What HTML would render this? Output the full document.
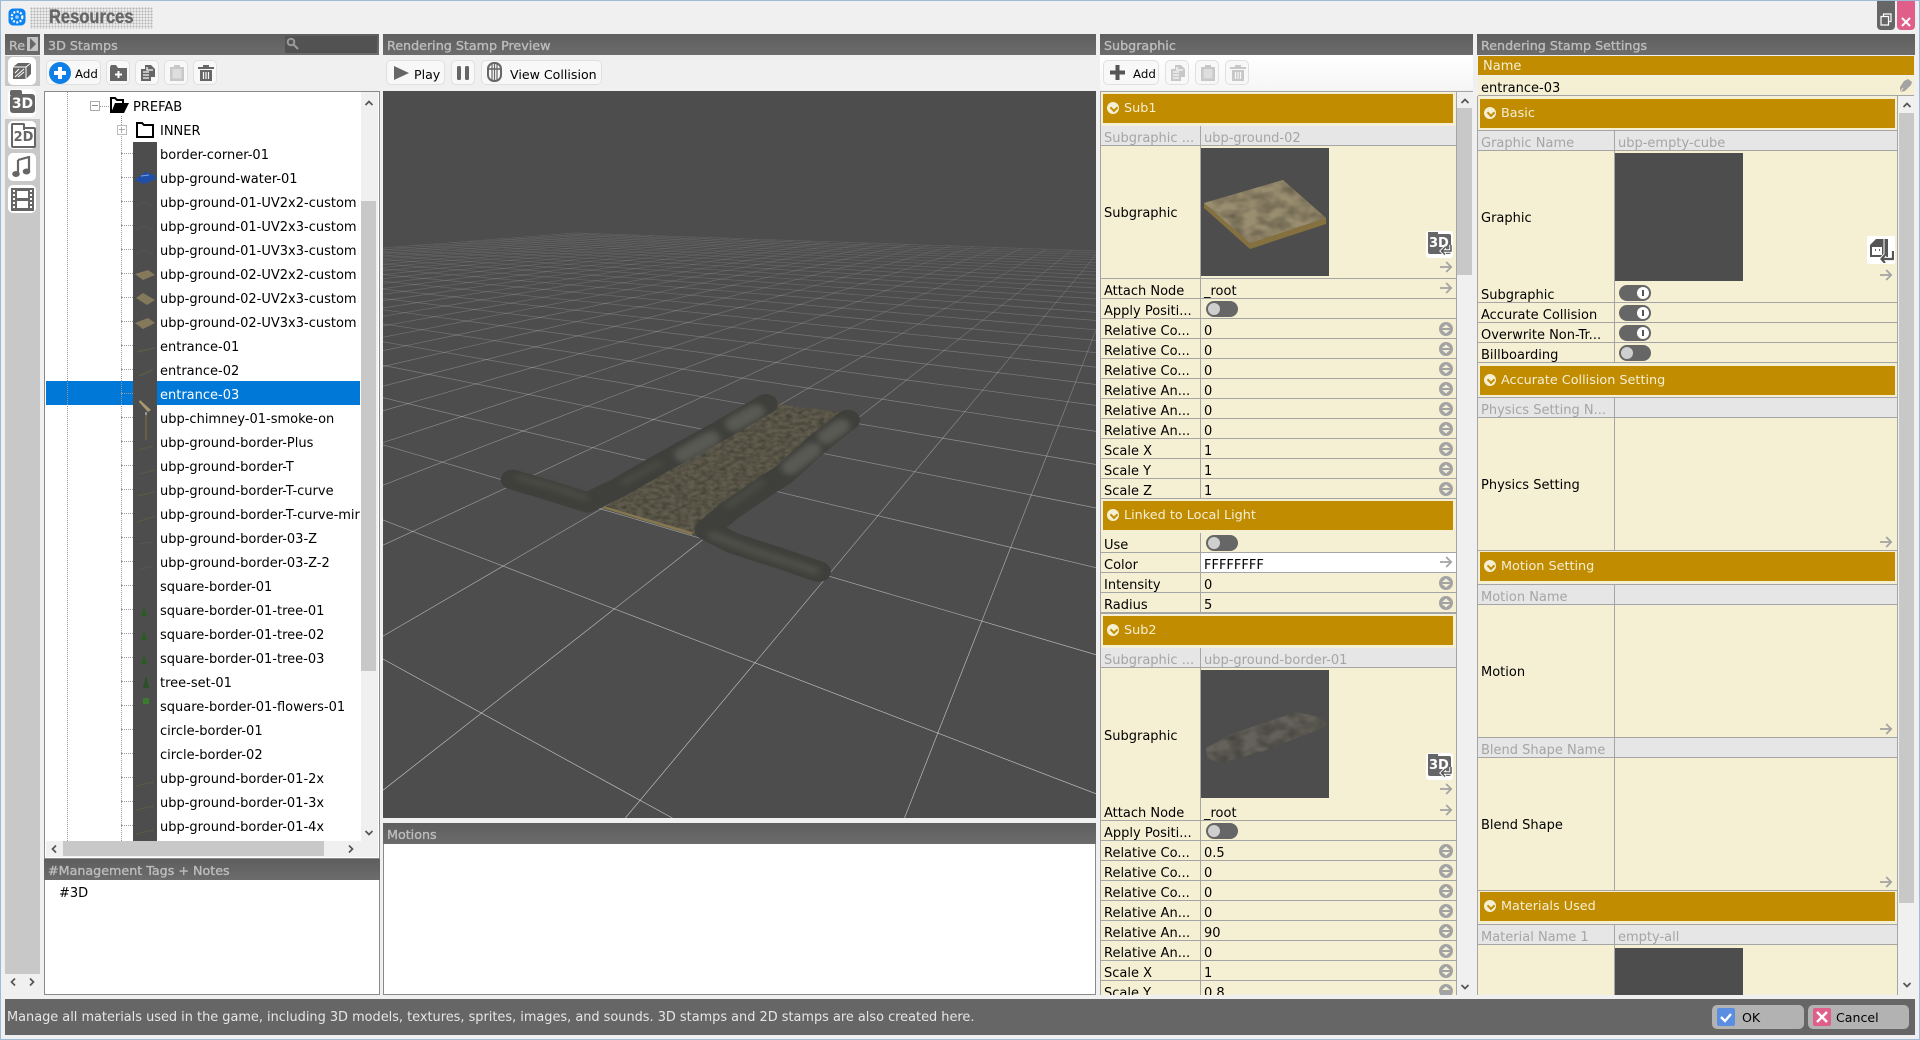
<!DOCTYPE html>
<html><head><meta charset="utf-8"><title>Resources</title>
<style>
html,body{margin:0;padding:0}
body{width:1920px;height:1040px;overflow:hidden;background:#f0f0f0;font:13px/20px "DejaVu Sans","Liberation Sans",sans-serif;color:#000;position:relative}
.a{position:absolute}
.h{position:absolute;height:21px;background:linear-gradient(#5e5e5e,#6c6c6c);color:#bdbdbd;font-weight:normal;font-size:12.7px;-webkit-text-stroke:.35px #bdbdbd;line-height:24px;padding-left:4px;box-sizing:border-box;white-space:nowrap;overflow:hidden}
.b{position:absolute;top:60px;height:25px;box-sizing:border-box;border:1px solid #e0e0e0;border-radius:5px;background:#f8f8f8;line-height:26px;font-size:12.6px;white-space:nowrap}
.b svg{position:absolute}
.tree{position:absolute;left:44px;top:91px;width:336px;height:768px;box-sizing:border-box;border:1px solid #8a8a8a;background:#fff;overflow:hidden}
.rows{position:absolute;left:1px;top:49px;width:314px;height:699px;overflow:hidden}
.rows div{height:24px;line-height:29px;padding-left:114px;white-space:nowrap;position:relative;font-size:13px}
.rows div:before{content:"";position:absolute;left:75px;top:12px;width:12px;border-top:1px dotted #999}
.rows .s{background:#0078d7;color:#fff}
.p{position:absolute;overflow:hidden;background:#fff}
.g{position:absolute;height:29px;background:#c18c00;color:#f5efd3;line-height:30px;padding-left:21px;box-sizing:border-box;white-space:nowrap;font-size:12.8px}
.g:before{content:"";position:absolute;left:4px;top:8px;width:12px;height:12px;border-radius:50%;background:#f5efd3}
.g:after{content:"";position:absolute;left:7.5px;top:11px;width:4px;height:4px;border:solid #c18c00;border-width:0 2px 2px 0;transform:rotate(45deg)}
.r{position:absolute;box-sizing:border-box;border-bottom:1px solid #a5a5a5;background:#f5efd3;overflow:hidden}
.r .l,.r .v{position:absolute;top:0;white-space:nowrap;font-size:13px;line-height:25px}
.r .v{line-height:26px}
.r .d{position:absolute;top:0;bottom:0;width:1px;background:#a5a5a5}
.gy{background:#e6e6e6;color:#a5a5a5}
.sub .r{left:0;width:355px}
.sub .l{left:3px}.sub .v{left:103px}.sub .d{left:99px}
.set .r{left:0;width:419px}
.set .l{left:3px}.set .v{left:140px}.set .d{left:136px}
.k{position:absolute;left:105px;top:2px;width:32px;height:16px;border-radius:8px;background:#666}
.k:before{content:"";position:absolute;left:2px;top:2px;width:12px;height:12px;border-radius:50%;background:#cfcfcf}
.k.on:before{left:18px;background:#fff}
.k.on:after{content:"";position:absolute;left:23px;top:5px;width:2px;height:6px;background:#555}
.set .k{left:141px}
.ic{position:absolute}
.th{position:absolute;background:#4d4d4d}
.sb{position:absolute;background:#f0f0f0}
.t{position:absolute;width:28px;height:28px;background:#fff;border-radius:5px}
.tg{position:absolute;left:327px;top:88px;width:23px;height:20px;background:#666;border-radius:2px;color:#fff;font:bold 13px/20px 'DejaVu Sans',sans-serif;padding-left:1px;box-sizing:border-box}
</style></head><body>
<svg width="0" height="0" style="position:absolute">
<defs>
<symbol id="arr" viewBox="0 0 14 14"><path d="M1 7H12M7.2 2L12.2 7L7.2 12" fill="none" stroke="#a3a3a3" stroke-width="1.7"/></symbol>
<symbol id="spin" viewBox="0 0 16 16"><circle cx="8" cy="8" r="7" fill="#a3a3a3"/><path d="M4 7L8 3.5L12 7ZM4 9L8 12.5L12 9Z" fill="#f5efd3"/></symbol>
<symbol id="up" viewBox="0 0 10 8"><path d="M1.5 6L5 2.5L8.5 6" fill="none" stroke="#555" stroke-width="1.7"/></symbol>
<symbol id="dn" viewBox="0 0 10 8"><path d="M1.5 2L5 5.5L8.5 2" fill="none" stroke="#555" stroke-width="1.7"/></symbol>
<symbol id="lf" viewBox="0 0 8 10"><path d="M6 1.5L2.5 5L6 8.5" fill="none" stroke="#555" stroke-width="1.7"/></symbol>
<symbol id="rt" viewBox="0 0 8 10"><path d="M2 1.5L5.5 5L2 8.5" fill="none" stroke="#555" stroke-width="1.7"/></symbol>
<symbol id="copy" viewBox="0 0 18 18"><path d="M6 1H12L16 5V13H12V17H2V5H6Z" fill="currentColor"/><path d="M8 3V6H14M4 8H10M4 11H10M4 14H10" stroke="#f8f8f8" stroke-width="1.3" fill="none"/></symbol>
<symbol id="paste" viewBox="0 0 18 18"><path d="M2 3H6V1H12V3H16V17H2Z" fill="currentColor"/><rect x="4.5" y="5" width="9" height="9.5" fill="#f8f8f8" opacity=".45"/></symbol>
<symbol id="trash" viewBox="0 0 18 18"><path d="M1 3H6V1H12V3H17V5H1ZM3 6H15V17H3Z" fill="currentColor"/><path d="M6.5 8V15M9 8V15M11.5 8V15" stroke="#f8f8f8" stroke-width="1.2"/></symbol>
<symbol id="sw" viewBox="0 0 14 14"><path d="M12 2V8H3M6 4.5L2.5 8L6 11.5" fill="none" stroke="#fff" stroke-width="3.4"/><path d="M12 2V8H3M6 4.5L2.5 8L6 11.5" fill="none" stroke="#555" stroke-width="1.5"/></symbol>
<filter id="tx" x="0" y="0" width="100%" height="100%" color-interpolation-filters="sRGB"><feTurbulence type="fractalNoise" baseFrequency=".07 .11" numOctaves="2" seed="4" result="n"/><feColorMatrix in="n" type="matrix" values="0 0 0 0 0 0 0 0 0 0 0 0 0 0 0 .55 0 0 0 -.17" result="m"/><feComposite in="m" in2="SourceAlpha" operator="in" result="c"/><feMerge><feMergeNode in="SourceGraphic"/><feMergeNode in="c"/></feMerge></filter>
<filter id="sf" x="-10%" y="-10%" width="120%" height="120%" color-interpolation-filters="sRGB"><feGaussianBlur stdDeviation="7"/></filter>
</defs></svg>

<!-- window frame -->
<div class="a" style="left:0;top:0;width:1920px;height:1px;background:#9dbad6"></div>
<div class="a" style="left:0;top:0;width:1px;height:1040px;background:#9dbad6"></div>
<div class="a" style="right:0;top:0;width:1px;height:1040px;background:#9dbad6"></div>
<div class="a" style="left:0;top:1039px;width:1920px;height:1px;background:#9dbad6"></div>

<!-- title -->
<svg class="ic" style="left:8px;top:8px" width="18" height="18" viewBox="0 0 18 18"><rect width="17" height="17" x=".5" y=".5" rx="4.5" fill="#0d83f2"/><circle cx="9" cy="9" r="5.3" fill="none" stroke="#fff" stroke-width="2.2" stroke-dasharray="2 1.5"/><circle cx="9" cy="9" r="1.8" fill="#9fd0ff"/></svg>
<div class="a" style="left:30px;top:7px;width:123px;height:22px;background-image:radial-gradient(circle,#b4b4b4 1px,transparent 1.1px);background-size:3px 3px"></div>
<div class="a" style="left:49px;top:6px;font:bold 19px/24px 'Liberation Sans',sans-serif;color:#666;-webkit-text-stroke:.3px #666;transform:scaleX(.87);transform-origin:0 0">Resources</div>
<div class="a" style="left:1877px;top:1px;width:18px;height:29px;background:#666;border-radius:0 0 4px 4px"></div>
<svg class="ic" style="left:1880px;top:13px" width="12" height="13" viewBox="0 0 12 13"><path d="M3.5 3.5V1H11V8.5H8.5M1 3.5H8.5V12H1Z" fill="none" stroke="#fff" stroke-width="1.2"/></svg>
<div class="a" style="left:1897px;top:1px;width:18px;height:29px;background:#e05f8a;border-radius:0 0 4px 4px"></div>
<svg class="ic" style="left:1901px;top:17px" width="10" height="10" viewBox="0 0 10 10"><path d="M1 1L9 9M9 1L1 9" stroke="#fff" stroke-width="2"/></svg>

<!-- left strip -->
<div class="a" style="left:5px;top:56px;width:35px;height:918px;background:#c8c8c8"></div>
<div class="h" style="left:5px;top:34px;width:35px;padding-left:4px">Re</div>
<div class="a" style="left:27px;top:37px;width:11px;height:14px;background:#c4c4c4"></div>
<svg class="ic" style="left:29px;top:38px" width="8" height="12" viewBox="0 0 8 12"><path d="M1 0L7 6L1 12Z" fill="#666"/></svg>
<div class="a" style="left:5px;top:86px;width:35px;height:33px;background:#f0f0f0"></div>
<div class="t" style="left:8px;top:57px"></div>
<svg class="ic" style="left:12px;top:62px" width="20" height="18" viewBox="0 0 20 18"><path d="M1 5L6 1H19V12L14 17H1Z" fill="#666"/><path d="M1 5H14V17M14 5L19 1" stroke="#fff" stroke-width="1" fill="none"/><path d="M3 15L12 7M6 15L12 10M3 11L7 7" stroke="#fff" stroke-width="1"/></svg>
<div class="t" style="left:8px;top:89px"></div>
<div class="a" style="left:10px;top:94px;width:25px;height:19px;background:#666;border-radius:3px;color:#fff;font:bold 14px/20px 'DejaVu Sans',sans-serif;text-align:center">3D</div>
<div class="a" style="left:10px;top:90px;width:12px;height:5px;background:#666;border-radius:2px 2px 0 0"></div>
<div class="t" style="left:8px;top:121px"></div>
<div class="a" style="left:11px;top:127px;width:21px;height:17px;border:2px solid #666;border-radius:2px;color:#666;font:bold 13px/18px 'DejaVu Sans',sans-serif;text-align:center">2D</div>
<div class="a" style="left:11px;top:123px;width:10px;height:5px;border:2px solid #666;border-bottom:0;border-radius:2px 2px 0 0;background:#fff"></div>
<div class="t" style="left:8px;top:153px"></div>
<svg class="ic" style="left:12px;top:156px" width="19" height="22" viewBox="0 0 19 22"><path d="M6 4L17 1V15" fill="none" stroke="#666" stroke-width="2.2"/><path d="M6 4V18" stroke="#666" stroke-width="2.2"/><ellipse cx="4" cy="18" rx="3.8" ry="3" fill="#666"/><ellipse cx="14.5" cy="15.5" rx="3.8" ry="3" fill="#666"/></svg>
<div class="t" style="left:8px;top:185px"></div>
<svg class="ic" style="left:11px;top:188px" width="23" height="23" viewBox="0 0 23 23"><rect width="23" height="23" fill="#666"/><rect x="6" y="3" width="11" height="7" fill="#fff"/><rect x="6" y="13" width="11" height="7" fill="#fff"/><path d="M2 3H4M2 7H4M2 11H4M2 15H4M2 19H4M19 3H21M19 7H21M19 11H21M19 15H21M19 19H21" stroke="#fff" stroke-width="2"/></svg>
<svg class="ic" style="left:9px;top:977px;width:8px;height:10px"><use href="#lf"/></svg>
<svg class="ic" style="left:28px;top:977px;width:8px;height:10px"><use href="#rt"/></svg>

<!-- 3D stamps -->
<div class="h" style="left:44px;top:34px;width:335px">3D Stamps</div>
<div class="a" style="left:285px;top:36px;width:92px;height:17px;background:#525252"></div>
<svg class="ic" style="left:286px;top:37px" width="13" height="13" viewBox="0 0 13 13"><circle cx="5" cy="5" r="3.3" fill="none" stroke="#9a9a9a" stroke-width="2"/><path d="M7.5 7.5L12 12" stroke="#9a9a9a" stroke-width="2.2"/></svg>

<div class="b" style="left:46px;width:55px"><span class="a" style="left:28px;top:0;color:#000;font-size:11.8px">Add</span></div>
<svg class="ic" style="left:49px;top:62px" width="22" height="22" viewBox="0 0 22 22"><circle cx="11" cy="11" r="11" fill="#1080e8"/><path d="M11 5V17M5 11H17" stroke="#fff" stroke-width="4"/></svg>
<div class="b" style="left:106px;width:24px"></div>
<svg class="ic" style="left:110px;top:65px" width="17" height="16" viewBox="0 0 17 16"><path d="M0 2V16H17V3H8L6 0H1Z" fill="#666"/><path d="M8.5 6V13M5 9.5H12" stroke="#fff" stroke-width="2"/></svg>
<div class="b" style="left:135px;width:24px;color:#666"><svg style="left:3px;top:3px;width:18px;height:18px"><use href="#copy"/></svg></div>
<div class="b" style="left:164px;width:24px;color:#c8c8c8"><svg style="left:3px;top:3px;width:18px;height:18px"><use href="#paste"/></svg></div>
<div class="b" style="left:193px;width:24px;color:#666"><svg style="left:3px;top:3px;width:18px;height:18px"><use href="#trash"/></svg></div>

<div class="tree">
  <div class="rows">
<div>border-corner-01</div>
<div>ubp-ground-water-01</div>
<div>ubp-ground-01-UV2x2-custom</div>
<div>ubp-ground-01-UV2x3-custom</div>
<div>ubp-ground-01-UV3x3-custom</div>
<div>ubp-ground-02-UV2x2-custom</div>
<div>ubp-ground-02-UV2x3-custom</div>
<div>ubp-ground-02-UV3x3-custom</div>
<div>entrance-01</div>
<div>entrance-02</div>
<div class="s">entrance-03</div>
<div>ubp-chimney-01-smoke-on</div>
<div>ubp-ground-border-Plus</div>
<div>ubp-ground-border-T</div>
<div>ubp-ground-border-T-curve</div>
<div>ubp-ground-border-T-curve-mirror</div>
<div>ubp-ground-border-03-Z</div>
<div>ubp-ground-border-03-Z-2</div>
<div>square-border-01</div>
<div>square-border-01-tree-01</div>
<div>square-border-01-tree-02</div>
<div>square-border-01-tree-03</div>
<div>tree-set-01</div>
<div>square-border-01-flowers-01</div>
<div>circle-border-01</div>
<div>circle-border-02</div>
<div>ubp-ground-border-01-2x</div>
<div>ubp-ground-border-01-3x</div>
<div>ubp-ground-border-01-4x</div>
  </div>
  <div class="a" style="left:22px;top:0;height:749px;border-left:1px dotted #999"></div>
  <div class="a" style="left:76px;top:24px;height:725px;border-left:1px dotted #999"></div>
  <div class="a" style="left:55px;top:14px;width:9px;border-top:1px dotted #999"></div>
  <div class="a" style="left:45px;top:9px;width:8px;height:8px;border:1px solid #aaa;background:#fff"></div>
  <div class="a" style="left:47px;top:13px;width:6px;height:1px;background:#888"></div>
  <div class="a" style="left:72px;top:33px;width:8px;height:8px;border:1px solid #bbb;background:#fff"></div>
  <div class="a" style="left:74px;top:37px;width:6px;height:1px;background:#aaa"></div>
  <div class="a" style="left:76px;top:35px;width:1px;height:6px;background:#aaa"></div>
  <svg class="ic" style="left:64px;top:3px" width="21" height="20" viewBox="0 0 21 20"><path d="M2 18V3H6L8 5H14V8" fill="none" stroke="#000" stroke-width="2"/><path d="M2 18L6 8H20L15 18Z" fill="#000"/></svg>
  <div class="a" style="left:88px;top:2px;height:24px;font-size:13px;line-height:28px">PREFAB</div>
  <svg class="ic" style="left:91px;top:29px" width="19" height="17" viewBox="0 0 19 17"><path d="M1 16V2H6L8 4H17V16Z" fill="none" stroke="#000" stroke-width="2"/></svg>
  <div class="a" style="left:115px;top:26px;height:24px;font-size:13px;line-height:28px">INNER</div>
  <div class="th" style="left:88px;top:50px;width:24px;height:699px"></div>
  <svg class="ic" style="left:88px;top:50px" width="24" height="699" viewBox="0 0 24 699">
    <path d="M2 38L12 30L21 33L23 37L11 42Z" fill="#1f4fa8"/><path d="M8 34L16 33" stroke="#7fa0e0"/>
    <path d="M3 64L10 60L20 64" stroke="#555" fill="none"/><path d="M3 88L12 84L20 88" stroke="#555" fill="none"/><path d="M3 112L12 108L20 112" stroke="#555" fill="none"/>
    <path d="M2 132L15 128L22 133L10 138Z" fill="#85795c"/><path d="M3 156L10 151L22 158L14 163Z" fill="#85795c"/><path d="M2 181L15 176L22 181L10 187Z" fill="#85795c"/>
    <path d="M4 210L22 206M6 234L20 228" stroke="#5c5a4a" stroke-width="1.5"/>
    <path d="M7 258L18 268L15 270L6 260Z" fill="#a8996e"/>
    <path d="M13 272V298" stroke="#6a5f40" stroke-width="2"/><path d="M13 270V273" stroke="#ddd"/>
    <path d="M5 308L20 304M7 332L22 328M4 354L22 350M4 380L22 374" stroke="#5e5a46"/>
    <path d="M5 402L20 400M5 428L20 424" stroke="#555"/>
    <path d="M8 474L11 464L14 474ZM8 498L11 488L14 498ZM8 522L11 512L14 522Z" fill="#2e5a2a"/>
    <path d="M10 546L13 534L16 546Z" fill="#2a5026"/><rect x="10" y="556" width="6" height="6" fill="#3c7a30"/>
    <path d="M3 644L21 640M3 668L21 664M3 692L21 688" stroke="#5e5a46"/>
  </svg>
  <!-- vertical scroll -->
  <div class="sb" style="left:316px;top:0;width:17px;height:749px"></div>
  <div class="a" style="left:316px;top:109px;width:15px;height:470px;background:#c8c8c8"></div>
  <svg class="ic" style="left:319px;top:7px;width:10px;height:8px"><use href="#up"/></svg>
  <svg class="ic" style="left:319px;top:737px;width:10px;height:8px"><use href="#dn"/></svg>
  <!-- horizontal scroll -->
  <div class="sb" style="left:1px;top:749px;width:332px;height:16px"></div>
  <div class="a" style="left:18px;top:749px;width:261px;height:15px;background:#c8c8c8"></div>
  <svg class="ic" style="left:5px;top:752px;width:8px;height:10px"><use href="#lf"/></svg>
  <svg class="ic" style="left:302px;top:752px;width:8px;height:10px"><use href="#rt"/></svg>
</div>

<div class="h" style="left:44px;top:859px;width:336px">#Management Tags + Notes</div>
<div class="a" style="left:44px;top:880px;width:336px;height:115px;box-sizing:border-box;background:#fff;border:1px solid #8a8a8a;border-top:0"><span class="a" style="left:14px;top:4px;font-size:13px">#3D</span></div>

<!-- preview -->
<div class="h" style="left:383px;top:34px;width:713px">Rendering Stamp Preview</div>
<div class="b" style="left:386px;width:59px"><span class="a" style="left:27px;top:1px">Play</span></div>
<svg class="ic" style="left:394px;top:66px" width="15" height="14" viewBox="0 0 15 14"><path d="M0 0L15 7L0 14Z" fill="#666"/></svg>
<div class="b" style="left:451px;width:24px"></div>
<svg class="ic" style="left:457px;top:66px" width="13" height="14" viewBox="0 0 13 14"><rect x="0" y="0" width="4" height="14" rx="1.5" fill="#666"/><rect x="8" y="0" width="4" height="14" rx="1.5" fill="#666"/></svg>
<div class="b" style="left:481px;width:121px"><span class="a" style="left:28px;top:1px">View Collision</span></div>
<svg class="ic" style="left:487px;top:62px" width="15" height="20" viewBox="0 0 15 20"><rect x="1" y="1" width="13" height="18" rx="6" fill="none" stroke="#666" stroke-width="2"/><path d="M1 7H14" stroke="#666" stroke-width="1.6"/><path d="M5 2V18M7.5 2V18M10 2V18" stroke="#666" stroke-width="1.2"/></svg>

<div class="a" id="vp" style="left:383px;top:91px;width:713px;height:727px;background:#4d4d4d;overflow:hidden">
<svg id="gridsvg" width="713" height="727" viewBox="0 0 713 727" style="position:absolute;left:0;top:0">
<g id="grid"></g>
<g transform="translate(0 129) scale(.4547 .3834)">
  <path d="M485 750L862 480L1020 503L680 822Z" fill="#615d4e" filter="url(#tx)"/>
  <path d="M485 752L680 822L680 814L485 746Z" fill="#85774f"/>
  <g fill="none" stroke-linecap="round" stroke-linejoin="round">
    <path d="M285 677L370 707L450 737L520 697L615 632L745 547L842 480" stroke="#3f3f3b" stroke-width="52"/>
    <path d="M1022 522L960 580L880 665L840 695L760 760L712 808L770 843L880 885L958 917" stroke="#3f3f3b" stroke-width="54"/>
    <g filter="url(#sf)">
      <path d="M300 672L370 695L445 725" stroke="#4b4b46" stroke-width="18"/>
      <path d="M660 612L722 570M772 532L820 500" stroke="#5a5a55" stroke-width="38"/>
      <path d="M975 565L1008 538M895 645L945 600" stroke="#5a5a55" stroke-width="38"/>
      <path d="M725 822L800 857L950 915" stroke="#4f4f4a" stroke-width="22"/>
      <path d="M760 745L830 685" stroke="#4a4a45" stroke-width="20"/>
      <path d="M530 685L605 635" stroke="#4a4a45" stroke-width="18"/>
    </g>
  </g>
</g>
</svg>
</div>

<div class="h" style="left:383px;top:823px;width:713px">Motions</div>
<div class="a" style="left:383px;top:844px;width:713px;height:151px;box-sizing:border-box;background:#fff;border:1px solid #8a8a8a;border-top:0"></div>

<!-- subgraphic -->
<div class="h" style="left:1100px;top:34px;width:373px">Subgraphic</div>
<div class="a" style="left:1100px;top:55px;width:373px;height:35px;background:linear-gradient(#fff,#f6f6f6)"></div>
<div class="b" style="left:1103px;width:56px"><span class="a" style="left:29px;top:0;font-size:11.8px">Add</span></div>
<svg class="ic" style="left:1110px;top:65px" width="15" height="15" viewBox="0 0 15 15"><path d="M7.5 0V15M0 7.5H15" stroke="#555" stroke-width="4"/></svg>
<div class="b" style="left:1165px;width:24px;color:#c8c8c8"><svg style="left:3px;top:3px;width:18px;height:18px"><use href="#copy"/></svg></div>
<div class="b" style="left:1195px;width:24px;color:#c8c8c8"><svg style="left:3px;top:3px;width:18px;height:18px"><use href="#paste"/></svg></div>
<div class="b" style="left:1225px;width:24px;color:#c8c8c8"><svg style="left:3px;top:3px;width:18px;height:18px"><use href="#trash"/></svg></div>

<div class="p sub" style="left:1100px;top:91px;width:373px;height:904px;background:#f0f0f0;border-top:1px solid #a5a5a5;box-sizing:border-box">
 <div class="a" style="left:0;top:0;height:903px;border-left:1px solid #a5a5a5;border-right:1px solid #a5a5a5;width:355px;background:#f0f0f0"></div>
 <div class="a" style="left:1px;top:0;width:355px;height:903px;overflow:hidden">
  <div class="a" style="left:0;top:0;width:355px;height:34px;background:#f5efd3"></div>
  <div class="g" style="left:2px;top:2px;width:350px">Sub1</div>
  <div class="r gy" style="top:34px;height:20px"><span class="l">Subgraphic ...</span><span class="v">ubp-ground-02</span><i class="d"></i></div>
  <div class="r" style="top:54px;height:133px"><span class="l" style="top:55px">Subgraphic</span><i class="d"></i>
    <div class="th" style="left:100px;top:2px;width:128px;height:128px">
      <svg width="128" height="128" viewBox="0 0 128 128"><path d="M3 55L82 32L125 70L125 76L49 101L3 60Z" fill="#84713f"/><path d="M3 55L82 32L125 70L49 95Z" fill="#9a8e70" filter="url(#tx)"/></svg>
    </div>
    <div class="a" style="left:325px;top:85px;width:27px;height:27px;background:#fff;border-radius:3px"></div>
    <div class="tg">3D</div>
    <div class="a" style="left:327px;top:86px;width:10px;height:3px;background:#666"></div>
    <svg class="ic" style="left:338px;top:97px;width:14px;height:14px"><use href="#sw"/></svg>
    <svg class="ic" style="left:338px;top:114px;width:14px;height:14px"><use href="#arr"/></svg>
  </div>
  <div class="r" style="top:187px;height:20px"><span class="l">Attach Node</span><span class="v">_root</span><i class="d"></i><svg class="ic" style="left:338px;top:2px;width:14px;height:14px"><use href="#arr"/></svg></div>
  <div class="r" style="top:207px;height:20px"><span class="l">Apply Positi...</span><i class="d"></i><span class="k"></span></div>
  <div class="r" style="top:227px;height:20px"><span class="l">Relative Co...</span><span class="v">0</span><i class="d"></i><svg class="ic" style="left:337px;top:2px;width:16px;height:16px"><use href="#spin"/></svg></div>
  <div class="r" style="top:247px;height:20px"><span class="l">Relative Co...</span><span class="v">0</span><i class="d"></i><svg class="ic" style="left:337px;top:2px;width:16px;height:16px"><use href="#spin"/></svg></div>
  <div class="r" style="top:267px;height:20px"><span class="l">Relative Co...</span><span class="v">0</span><i class="d"></i><svg class="ic" style="left:337px;top:2px;width:16px;height:16px"><use href="#spin"/></svg></div>
  <div class="r" style="top:287px;height:20px"><span class="l">Relative An...</span><span class="v">0</span><i class="d"></i><svg class="ic" style="left:337px;top:2px;width:16px;height:16px"><use href="#spin"/></svg></div>
  <div class="r" style="top:307px;height:20px"><span class="l">Relative An...</span><span class="v">0</span><i class="d"></i><svg class="ic" style="left:337px;top:2px;width:16px;height:16px"><use href="#spin"/></svg></div>
  <div class="r" style="top:327px;height:20px"><span class="l">Relative An...</span><span class="v">0</span><i class="d"></i><svg class="ic" style="left:337px;top:2px;width:16px;height:16px"><use href="#spin"/></svg></div>
  <div class="r" style="top:347px;height:20px"><span class="l">Scale X</span><span class="v">1</span><i class="d"></i><svg class="ic" style="left:337px;top:2px;width:16px;height:16px"><use href="#spin"/></svg></div>
  <div class="r" style="top:367px;height:20px"><span class="l">Scale Y</span><span class="v">1</span><i class="d"></i><svg class="ic" style="left:337px;top:2px;width:16px;height:16px"><use href="#spin"/></svg></div>
  <div class="r" style="top:387px;height:20px"><span class="l">Scale Z</span><span class="v">1</span><i class="d"></i><svg class="ic" style="left:337px;top:2px;width:16px;height:16px"><use href="#spin"/></svg></div>
  <div class="a" style="left:0;top:407px;width:355px;height:34px;background:#f5efd3"></div>
  <div class="g" style="left:2px;top:409px;width:350px">Linked to Local Light</div>
  <div class="r" style="top:441px;height:20px"><span class="l">Use</span><i class="d"></i><span class="k"></span></div>
  <div class="r" style="top:461px;height:20px;background:#f5efd3"><span class="l">Color</span><div class="a" style="left:100px;top:0;width:255px;height:19px;background:#fff"></div><span class="v">FFFFFFFF</span><i class="d"></i><svg class="ic" style="left:338px;top:2px;width:14px;height:14px"><use href="#arr"/></svg></div>
  <div class="r" style="top:481px;height:20px"><span class="l">Intensity</span><span class="v">0</span><i class="d"></i><svg class="ic" style="left:337px;top:2px;width:16px;height:16px"><use href="#spin"/></svg></div>
  <div class="r" style="top:501px;height:21px;border-bottom-width:2px"><span class="l">Radius</span><span class="v">5</span><i class="d"></i><svg class="ic" style="left:337px;top:2px;width:16px;height:16px"><use href="#spin"/></svg></div>
  <div class="a" style="left:0;top:522px;width:355px;height:34px;background:#f5efd3"></div>
  <div class="g" style="left:2px;top:524px;width:350px">Sub2</div>
  <div class="r gy" style="top:556px;height:20px"><span class="l">Subgraphic ...</span><span class="v">ubp-ground-border-01</span><i class="d"></i></div>
  <div class="r" style="top:576px;height:134px"><span class="l" style="top:56px">Subgraphic</span><i class="d"></i>
    <div class="th" style="left:100px;top:2px;width:128px;height:128px">
      <svg width="128" height="128" viewBox="0 0 128 128"><path d="M5 78L30 64L95 42L122 48L126 56L60 82L18 93L6 88Z" fill="#64625a" filter="url(#tx)"/></svg>
    </div>
    <div class="a" style="left:325px;top:85px;width:27px;height:27px;background:#fff;border-radius:3px"></div>
    <div class="tg">3D</div>
    <div class="a" style="left:327px;top:86px;width:10px;height:3px;background:#666"></div>
    <svg class="ic" style="left:338px;top:97px;width:14px;height:14px"><use href="#sw"/></svg>
    <svg class="ic" style="left:338px;top:114px;width:14px;height:14px"><use href="#arr"/></svg>
  </div>
  <div class="r" style="top:709px;height:20px"><span class="l">Attach Node</span><span class="v">_root</span><i class="d"></i><svg class="ic" style="left:338px;top:2px;width:14px;height:14px"><use href="#arr"/></svg></div>
  <div class="r" style="top:729px;height:20px"><span class="l">Apply Positi...</span><i class="d"></i><span class="k"></span></div>
  <div class="r" style="top:749px;height:20px"><span class="l">Relative Co...</span><span class="v">0.5</span><i class="d"></i><svg class="ic" style="left:337px;top:2px;width:16px;height:16px"><use href="#spin"/></svg></div>
  <div class="r" style="top:769px;height:20px"><span class="l">Relative Co...</span><span class="v">0</span><i class="d"></i><svg class="ic" style="left:337px;top:2px;width:16px;height:16px"><use href="#spin"/></svg></div>
  <div class="r" style="top:789px;height:20px"><span class="l">Relative Co...</span><span class="v">0</span><i class="d"></i><svg class="ic" style="left:337px;top:2px;width:16px;height:16px"><use href="#spin"/></svg></div>
  <div class="r" style="top:809px;height:20px"><span class="l">Relative An...</span><span class="v">0</span><i class="d"></i><svg class="ic" style="left:337px;top:2px;width:16px;height:16px"><use href="#spin"/></svg></div>
  <div class="r" style="top:829px;height:20px"><span class="l">Relative An...</span><span class="v">90</span><i class="d"></i><svg class="ic" style="left:337px;top:2px;width:16px;height:16px"><use href="#spin"/></svg></div>
  <div class="r" style="top:849px;height:20px"><span class="l">Relative An...</span><span class="v">0</span><i class="d"></i><svg class="ic" style="left:337px;top:2px;width:16px;height:16px"><use href="#spin"/></svg></div>
  <div class="r" style="top:869px;height:20px"><span class="l">Scale X</span><span class="v">1</span><i class="d"></i><svg class="ic" style="left:337px;top:2px;width:16px;height:16px"><use href="#spin"/></svg></div>
  <div class="r" style="top:889px;height:14px;border-bottom:0"><span class="l">Scale Y</span><span class="v">0.8</span><i class="d"></i><svg class="ic" style="left:337px;top:2px;width:16px;height:12px" viewBox="0 0 16 12"><circle cx="8" cy="8" r="7" fill="#a3a3a3"/><path d="M4 7L8 3.5L12 7Z" fill="#f5efd3"/></svg></div>
 </div>
 <div class="a" style="left:357px;top:16px;width:15px;height:167px;background:#c8c8c8"></div>
 <svg class="ic" style="left:360px;top:5px;width:10px;height:8px"><use href="#up"/></svg>
 <svg class="ic" style="left:360px;top:891px;width:10px;height:8px"><use href="#dn"/></svg>
</div>

<!-- settings -->
<div class="h" style="left:1477px;top:34px;width:438px">Rendering Stamp Settings</div>
<div class="a" style="left:1478px;top:56px;width:436px;height:19px;background:#c18c00;color:#f5efd3;padding-left:5px;box-sizing:border-box;line-height:22px;font-size:13px">Name</div>
<div class="a" style="left:1478px;top:76px;width:436px;height:20px;box-sizing:border-box;background:#f5efd3;border-bottom:1px solid #a5a5a5;padding-left:3px;line-height:25px;font-size:13px;overflow:hidden">entrance-03</div>
<svg class="ic" style="left:1899px;top:79px" width="14" height="14" viewBox="0 0 14 14"><path d="M5 2L9 0L13 3L12 6L6 12L1 13L1 8Z" fill="#a3a3a3"/><path d="M1 13L4 9" stroke="#f5efd3"/></svg>

<div class="p set" style="left:1477px;top:96px;width:438px;height:899px;background:#f0f0f0">
 <div class="a" style="left:0;top:0;width:421px;height:899px;box-sizing:border-box;border-left:1px solid #a5a5a5;border-right:1px solid #a5a5a5;background:#f5efd3"></div>
 <div class="a" style="left:1px;top:0;width:419px;height:899px;overflow:hidden">
  <div class="g" style="left:2px;top:3px;width:415px">Basic</div>
  <div class="r gy" style="top:34px;height:21px;border-top:1px solid #a5a5a5"><span class="l">Graphic Name</span><span class="v">ubp-empty-cube</span><i class="d"></i></div>
  <div class="r" style="top:55px;height:133px"><span class="l" style="top:55px">Graphic</span><i class="d"></i>
    <div class="th" style="left:137px;top:2px;width:128px;height:128px"></div>
    <div class="a" style="left:389px;top:85px;width:28px;height:28px;background:#fff;border-radius:2px"></div>
    <svg class="ic" style="left:390px;top:86px" width="26" height="26" viewBox="0 0 26 26"><path d="M2 8L8 2H20V20H2Z" fill="#555"/><path d="M4 10H14V18H4Z" fill="#fff"/><path d="M7 13H8M11 13H12" stroke="#333" stroke-width="1.6"/><path d="M16 2V20" stroke="#fff"/><path d="M25 14V22H14M17 18L13.5 22L17 26" fill="none" stroke="#fff" stroke-width="4"/><path d="M25 14V22H14M17 18L13.5 22L17 26" fill="none" stroke="#555" stroke-width="2.2"/></svg>
    <svg class="ic" style="left:401px;top:117px;width:14px;height:14px"><use href="#arr"/></svg>
  </div>
  <div class="r" style="top:187px;height:20px"><span class="l">Subgraphic</span><i class="d"></i><span class="k on"></span></div>
  <div class="r" style="top:207px;height:20px"><span class="l">Accurate Collision</span><i class="d"></i><span class="k on"></span></div>
  <div class="r" style="top:227px;height:20px"><span class="l">Overwrite Non-Tr...</span><i class="d"></i><span class="k on"></span></div>
  <div class="r" style="top:247px;height:20px"><span class="l">Billboarding</span><i class="d"></i><span class="k"></span></div>
  <div class="g" style="left:2px;top:270px;width:415px">Accurate Collision Setting</div>
  <div class="r gy" style="top:301px;height:21px;border-top:1px solid #a5a5a5"><span class="l">Physics Setting N...</span><i class="d"></i></div>
  <div class="r" style="top:322px;height:133px"><span class="l" style="top:55px">Physics Setting</span><i class="d"></i><svg class="ic" style="left:401px;top:117px;width:14px;height:14px"><use href="#arr"/></svg></div>
  <div class="g" style="left:2px;top:456px;width:415px">Motion Setting</div>
  <div class="r gy" style="top:488px;height:21px;border-top:1px solid #a5a5a5"><span class="l">Motion Name</span><i class="d"></i></div>
  <div class="r" style="top:509px;height:133px"><span class="l" style="top:55px">Motion</span><i class="d"></i><svg class="ic" style="left:401px;top:117px;width:14px;height:14px"><use href="#arr"/></svg></div>
  <div class="r gy" style="top:642px;height:20px"><span class="l">Blend Shape Name</span><i class="d"></i></div>
  <div class="r" style="top:662px;height:133px"><span class="l" style="top:55px">Blend Shape</span><i class="d"></i><svg class="ic" style="left:401px;top:117px;width:14px;height:14px"><use href="#arr"/></svg></div>
  <div class="g" style="left:2px;top:796px;width:415px">Materials Used</div>
  <div class="r gy" style="top:828px;height:21px;border-top:1px solid #a5a5a5"><span class="l">Material Name 1</span><span class="v">empty-all</span><i class="d"></i></div>
  <div class="r" style="top:849px;height:50px;border:0"><i class="d"></i><div class="th" style="left:137px;top:3px;width:128px;height:47px"></div></div>
 </div>
 <div class="a" style="left:422px;top:17px;width:15px;height:790px;background:#c8c8c8"></div>
 <svg class="ic" style="left:425px;top:5px;width:10px;height:8px"><use href="#up"/></svg>
 <svg class="ic" style="left:425px;top:885px;width:10px;height:8px"><use href="#dn"/></svg>
</div>

<!-- status -->
<div class="a" style="left:5px;top:999px;width:1910px;height:36px;background:#666;color:#e6e6e6;line-height:37px;padding-left:2px;box-sizing:border-box;font-size:12.9px;white-space:nowrap;overflow:hidden">Manage all materials used in the game, including 3D models, textures, sprites, images, and sounds. 3D stamps and 2D stamps are also created here.</div>
<div class="a" style="left:1712px;top:1005px;width:92px;height:24px;background:#b2b2b2;border-radius:5px;line-height:26px;font-size:12.6px"><span class="a" style="left:30px;top:0">OK</span></div>
<svg class="ic" style="left:1717px;top:1008px" width="18" height="18" viewBox="0 0 18 18"><rect width="18" height="18" rx="2" fill="#5b8de0"/><path d="M4 9L8 13L14 6" fill="none" stroke="#fff" stroke-width="2.4"/></svg>
<div class="a" style="left:1808px;top:1005px;width:101px;height:24px;background:#b2b2b2;border-radius:5px;line-height:26px;font-size:12.6px"><span class="a" style="left:28px;top:0">Cancel</span></div>
<svg class="ic" style="left:1813px;top:1008px" width="18" height="18" viewBox="0 0 18 18"><rect width="18" height="18" rx="2" fill="#e05f8a"/><path d="M4 4L14 14M14 4L4 14" stroke="#fff" stroke-width="2.4"/></svg>

<script>
(function(){
 var al=-0.131,be=0.2244,px=-1850,py=-60,qx=1691,qy=-84,ox=818,oy=1155,W=713,H=727;
 function P(u,v){var A=al*u,B=be*v,w=1+A+B;return [((A*px+B*qx+ox)/w)*0.4547,129+((A*py+B*qy+oy)/w)*0.3834,w];}
 var g=document.getElementById('grid'),s='';
 var U0=-29,U1=7,V0=-9,V1=29;
 function clip(a,b){
  var t0=0,t1=1,dx=b[0]-a[0],dy=b[1]-a[1];
  var p=[-dx,dx,-dy,dy],q=[a[0],W-a[0],a[1],H-a[1]];
  for(var i=0;i<4;i++){
   if(p[i]===0){if(q[i]<0)return null;continue;}
   var r=q[i]/p[i];
   if(p[i]<0){if(r>t1)return null;if(r>t0)t0=r;}
   else{if(r<t0)return null;if(r<t1)t1=r;}
  }
  return [a[0]+t0*dx,a[1]+t0*dy,a[0]+t1*dx,a[1]+t1*dy];
 }
 function seg(a,b){
  var m=(a[2]+b[2])/2;if(m<=0.05||a[2]<=0.03||b[2]<=0.03)return '';
  var c=clip(a,b);if(!c)return '';
  var o=Math.min(.62,.6/Math.pow(m,.85));
  return '<line x1="'+c[0].toFixed(1)+'" y1="'+c[1].toFixed(1)+'" x2="'+c[2].toFixed(1)+'" y2="'+c[3].toFixed(1)+'" stroke-opacity="'+o.toFixed(2)+'"/>';
 }
 for(var u=U0;u<=U1;u++){for(var v=V0;v<V1;v++){s+=seg(P(u,v),P(u,v+1));}}
 for(var v=V0;v<=V1;v++){for(var u=U0;u<U1;u++){s+=seg(P(u,v),P(u+1,v));}}
 g.innerHTML='<g stroke="#fff" stroke-width=".7" fill="none">'+s+'</g>';
})();
</script>
</body></html>
